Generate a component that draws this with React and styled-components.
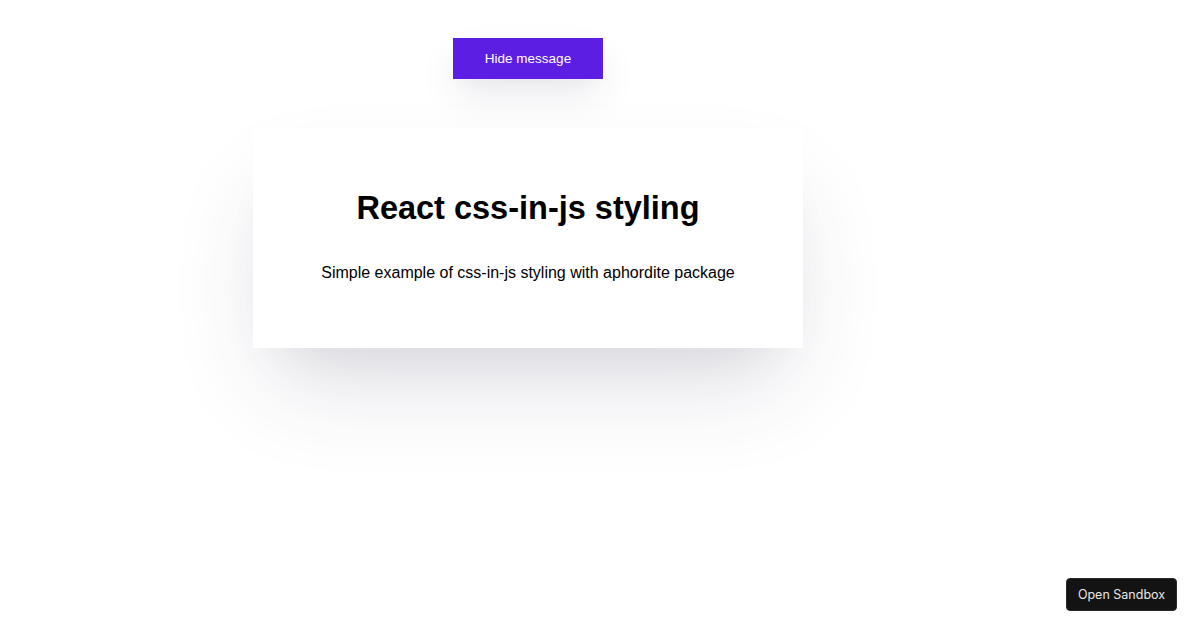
import React from "react";
import styled, { createGlobalStyle } from "styled-components";

const Global = createGlobalStyle`
  html, body { margin: 0; padding: 0; background: #ffffff; }
  body { font-family: "Liberation Sans", Arial, sans-serif; }
`;

const Page = styled.div`
  width: 1056px;
  min-height: 630px;
  display: flex;
  flex-direction: column;
  align-items: center;
  padding-top: 38px;
  box-sizing: border-box;
`;

const Toggle = styled.button`
  width: 150px;
  height: 41px;
  border: none;
  background: #5b1ee2;
  color: #ffffff;
  font-family: "Liberation Sans", Arial, sans-serif;
  font-size: 13.5px;
  box-shadow: 0 18px 40px -5px rgba(50, 50, 93, 0.12), 0 8px 20px -8px rgba(0, 0, 0, 0.06);
  cursor: pointer;
`;

const Card = styled.div`
  margin-top: 49px;
  width: 550px;
  height: 220px;
  box-sizing: border-box;
  background: #ffffff;
  box-shadow: 0 50px 100px -20px rgba(50, 50, 93, 0.16), 0 30px 60px -30px rgba(0, 0, 0, 0.08);
  display: flex;
  flex-direction: column;
  align-items: center;
  padding-top: 61px;
`;

const Title = styled.h1`
  margin: 0;
  font-size: 32.5px;
  font-weight: 700;
  color: #000;
  line-height: 38px;
`;

const Text = styled.p`
  margin: 36px 0 0;
  font-size: 16px;
  color: #000;
  line-height: 20px;
`;

const SandboxButton = styled.a`
  position: fixed;
  right: 23px;
  bottom: 19px;
  width: 111px;
  height: 33px;
  box-sizing: border-box;
  display: flex;
  align-items: center;
  justify-content: center;
  background: #131313;
  color: #e8e8e8;
  border-radius: 4px;
  border: 1px solid #2a2a2a;
  font-family: Inter, "Liberation Sans", sans-serif;
  font-size: 12.5px;
  text-decoration: none;
`;

export default function App() {
  return (
    <>
      <Global />
      <Page>
        <Toggle>Hide message</Toggle>
        <Card>
          <Title>React css-in-js styling</Title>
          <Text>Simple example of css-in-js styling with aphordite package</Text>
        </Card>
      </Page>
      <SandboxButton href="#">Open Sandbox</SandboxButton>
    </>
  );
}
